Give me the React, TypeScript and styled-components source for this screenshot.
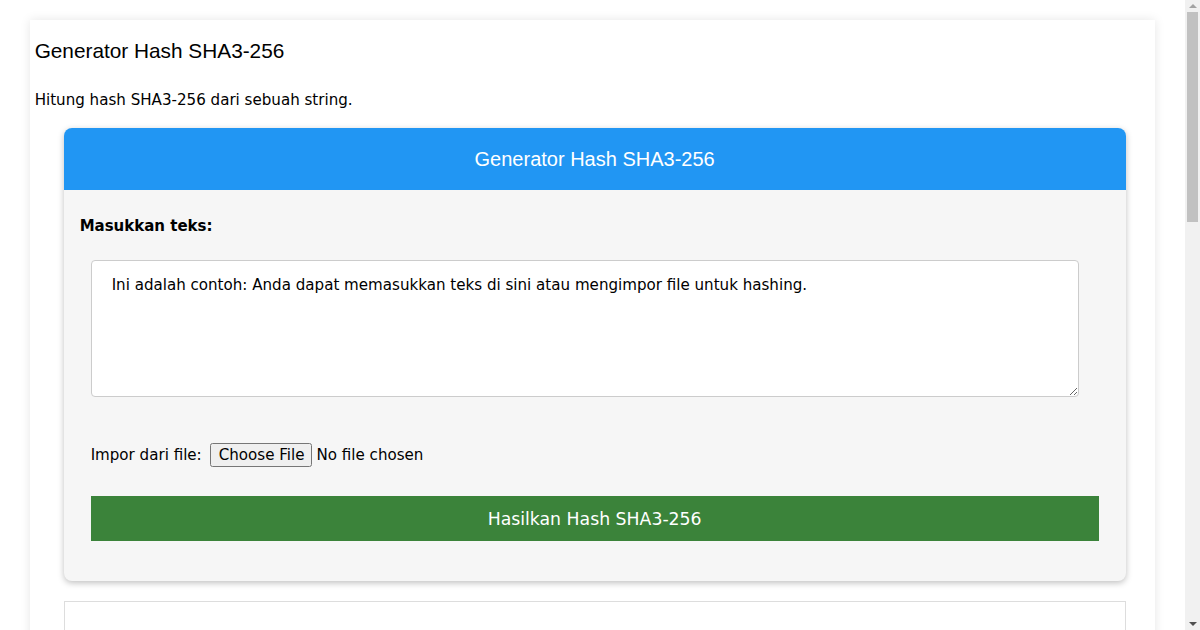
import { FC } from 'react';
import styled, { createGlobalStyle } from 'styled-components';

const GlobalStyle = createGlobalStyle`
  html, body {
    padding: 0;
    background: #ffffff;
  }
  html {
    margin: 0;
  }
  body {
    margin: 0 15px 0 0;
    font-family: 'DejaVu Sans', sans-serif;
    font-size: 15.1px;
    color: #000;
  }
`;

const App: FC = () => {
  return (
    <>
      <GlobalStyle />
      <StContainer>
        <StPageTitle>Generator Hash SHA3-256</StPageTitle>
        <StIntro>Hitung hash SHA3-256 dari sebuah string.</StIntro>

        <StCard>
          <StCardHeader>Generator Hash SHA3-256</StCardHeader>
          <StCardBody>
            <StLabel htmlFor="input-text">Masukkan teks:</StLabel>
            <StFormGroup>
              <StTextArea
                id="input-text"
                defaultValue="Ini adalah contoh: Anda dapat memasukkan teks di sini atau mengimpor file untuk hashing."
              />
              <StFileRow>
                <span>Impor dari file:</span>
                <StFileInput type="file" />
              </StFileRow>
              <StSubmit type="button">Hasilkan Hash SHA3-256</StSubmit>
            </StFormGroup>
          </StCardBody>
        </StCard>

        <StResultBox />
      </StContainer>

      <StScrollbar aria-hidden="true">
        <StArrow $dir="up" />
        <StThumb />
        <StArrow $dir="down" />
      </StScrollbar>
    </>
  );
};

export default App;

const StContainer = styled.div`
  width: 95%;
  margin: 20px auto;
  padding: 5px;
  box-sizing: border-box;
  background: #fff;
  box-shadow: 0 0 10px rgba(0, 0, 0, 0.1);
`;

const StPageTitle = styled.h1`
  margin: 14px 0 0;
  font-family: 'Liberation Sans', Arial, sans-serif;
  font-size: 20.8px;
  font-weight: normal;
  line-height: 24px;
`;

const StIntro = styled.p`
  margin: 28px 0 19px;
  line-height: 18px;
`;

const StCard = styled.div`
  width: 1062px;
  margin-left: 29px;
  background: #f6f6f6;
  border-radius: 8px;
  box-shadow: 0 2px 6px rgba(0, 0, 0, 0.25);
  overflow: hidden;
`;

const StCardHeader = styled.div`
  height: 62px;
  display: flex;
  align-items: center;
  justify-content: center;
  background: #2196f3;
  color: #fff;
  font-family: 'Liberation Sans', Arial, sans-serif;
  font-size: 20px;
`;

const StCardBody = styled.div`
  padding: 27px 16px 40px;
`;

const StLabel = styled.label`
  display: block;
  font-weight: bold;
  font-size: 15px;
  line-height: 18px;
  margin-bottom: 25px;
`;

const StFormGroup = styled.div`
  padding: 0 11px;
`;

const StTextArea = styled.textarea`
  display: block;
  width: calc(100% - 20px);
  height: 137px;
  box-sizing: border-box;
  padding: 15px 20px;
  border: 1px solid #ccc;
  border-radius: 4px;
  background: #fff;
  font-family: 'DejaVu Sans', sans-serif;
  font-size: 15.1px;
  line-height: 18px;
  color: #000;
`;

const StFileRow = styled.div`
  display: flex;
  align-items: center;
  gap: 8px;
  margin-top: 46px;
  height: 24px;
  line-height: 18px;
`;

const StFileInput = styled.input`
  font-family: 'DejaVu Sans', sans-serif;
  font-size: 15.1px;

  &::file-selector-button {
    font-family: 'DejaVu Sans', sans-serif;
    font-size: 15.1px;
    padding: 1px 6px 1px 7px;
    margin-right: 4px;
  }
`;

const StSubmit = styled.button`
  display: block;
  width: 100%;
  height: 45px;
  margin-top: 29px;
  border: none;
  background: #3b833a;
  color: #fff;
  font-family: 'DejaVu Sans', sans-serif;
  font-size: 17.3px;
  cursor: pointer;
`;

const StResultBox = styled.div`
  width: 1062px;
  height: 1172px;
  margin: 20px 0 20px 29px;
  box-sizing: border-box;
  background: #fff;
  border: 1px solid #ddd;
`;

const StScrollbar = styled.div`
  position: fixed;
  top: 0;
  right: 0;
  bottom: 0;
  width: 15px;
  display: flex;
  flex-direction: column;
  background: #f1f1f1;
`;

const StArrow = styled.div<{ $dir: 'up' | 'down' }>`
  height: 12px;
  display: flex;
  justify-content: center;
  align-items: center;
  margin-top: ${({ $dir }) => ($dir === 'down' ? 'auto' : '0')};

  &::before {
    content: '';
    width: 0;
    height: 0;
    border-left: 4px solid transparent;
    border-right: 4px solid transparent;
    ${({ $dir }) =>
      $dir === 'up'
        ? 'border-bottom: 4px solid #a3a3a3;'
        : 'border-top: 4px solid #505050;'}
  }
`;

const StThumb = styled.div`
  height: 210px;
  margin: 0 2px;
  background: #c1c1c1;
`;
